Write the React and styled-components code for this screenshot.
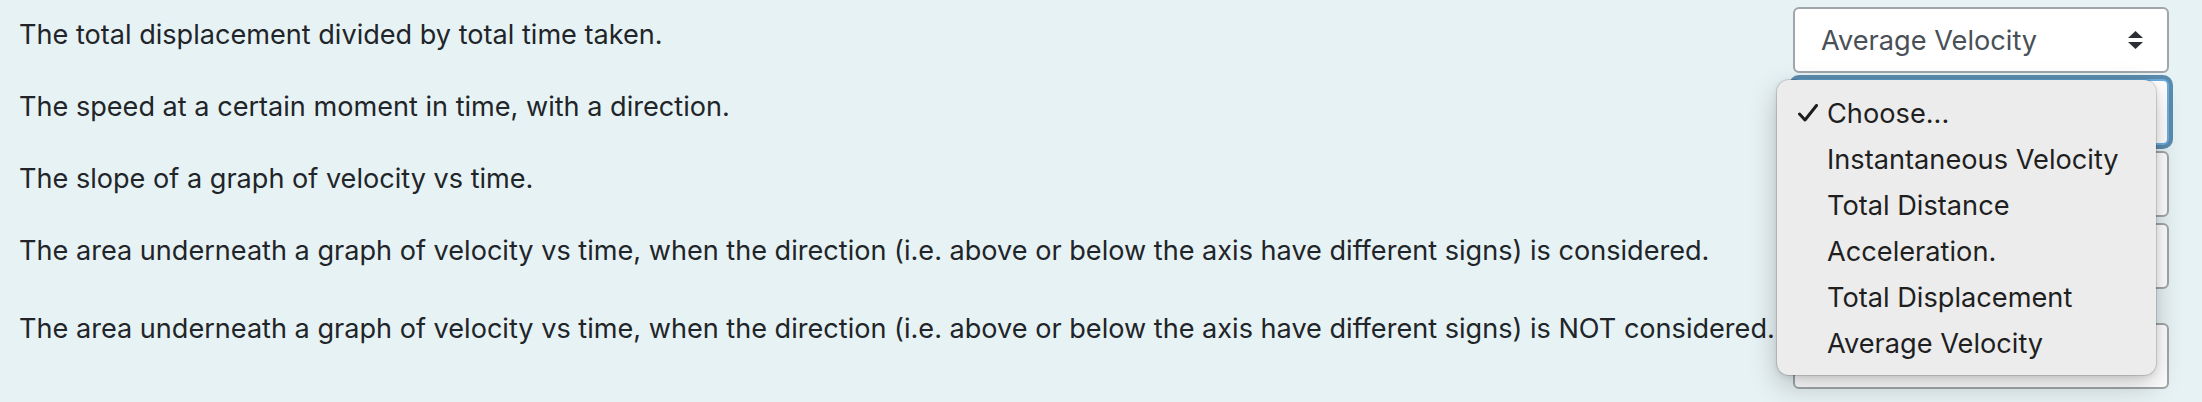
import React from "react";
import styled, { createGlobalStyle } from "styled-components";

const GlobalStyle = createGlobalStyle`
  html, body {
    margin: 0;
    padding: 0;
    background: #e7f2f4;
  }
  body {
    font-family: Inter, "Noto Sans", "Liberation Sans", sans-serif;
    color: #212529;
    -webkit-font-smoothing: antialiased;
  }
`;

// value is left empty where the open menu sits over the select
const definitions = [
  { text: "The total displacement divided by total time taken.", value: "Average Velocity" },
  { text: "The speed at a certain moment in time, with a direction.", value: "", selected: "Choose...", open: true },
  { text: "The slope of a graph of velocity vs time.", value: "" },
  {
    text: "The area underneath a graph of velocity vs time, when the direction (i.e. above or below the axis have different signs) is considered.",
    value: "",
  },
  {
    text: "The area underneath a graph of velocity vs time, when the direction (i.e. above or below the axis have different signs) is NOT considered.",
    value: "",
    spaced: true,
  },
];

const options = [
  "Choose...",
  "Instantaneous Velocity",
  "Total Distance",
  "Acceleration.",
  "Total Displacement",
  "Average Velocity",
];

export default function App() {
  return (
    <>
      <GlobalStyle />
      <Page>
        <MatchList>
          {definitions.map((d, i) => (
            <Row key={i} $spaced={d.spaced}>
              <Stem>{d.text}</Stem>
              <SelectBox $focused={d.open} $spaced={d.spaced}>
                <SelectValue>{d.value}</SelectValue>
                <Arrows />
                {d.open && (
                  <Menu>
                    {options.map((o) => (
                      <MenuItem key={o}>
                        <CheckSlot>{o === d.selected && <Check />}</CheckSlot>
                        {o}
                      </MenuItem>
                    ))}
                  </Menu>
                )}
              </SelectBox>
            </Row>
          ))}
        </MatchList>
      </Page>
    </>
  );
}

function Arrows() {
  return (
    <ArrowIcon width="15" height="18" viewBox="0 0 15 18">
      <polygon points="7.5,0 15,7 0,7" fill="#2b2f33" />
      <polygon points="0,11 15,11 7.5,18" fill="#2b2f33" />
    </ArrowIcon>
  );
}

function Check() {
  return (
    <svg width="20" height="18" viewBox="0 0 20 18">
      <polyline
        points="1.5,10 7,16 18.5,1.5"
        fill="none"
        stroke="#1d1d1f"
        strokeWidth="3"
        strokeLinecap="round"
        strokeLinejoin="round"
      />
    </svg>
  );
}

const Page = styled.div`
  height: 402px;
  box-sizing: border-box;
  padding: 7px 33px 0 19px;
  overflow: hidden;
`;

const MatchList = styled.div`
  display: flex;
  flex-direction: column;
  gap: 6px;
`;

const Row = styled.div`
  display: flex;
  justify-content: space-between;
  align-items: flex-start;
  margin-top: ${(p) => (p.$spaced ? "6px" : "0")};
`;

const Stem = styled.div`
  flex: 1 1 auto;
  min-width: 0;
  white-space: nowrap;
  font-size: 27.1px;
  line-height: 36px;
  padding-top: 10px;
`;

const SelectBox = styled.div`
  position: relative;
  flex: none;
  width: 376px;
  height: 66px;
  box-sizing: border-box;
  margin-top: ${(p) => (p.$spaced ? "22px" : "0")};
  display: flex;
  align-items: center;
  justify-content: space-between;
  padding: 0 24px 0 26px;
  background: #fff;
  border: 2px solid ${(p) => (p.$focused ? "#6aaee0" : "#a1a6ab")};
  border-radius: 6px;
  box-shadow: ${(p) => (p.$focused ? "0 0 0 4px #5b8cae" : "none")};
`;

const SelectValue = styled.span`
  font-size: 27.2px;
  color: #495057;
`;

const ArrowIcon = styled.svg`
  flex: none;
`;

const Menu = styled.div`
  position: absolute;
  left: -18px;
  top: -1px;
  z-index: 5;
  width: 379px;
  box-sizing: border-box;
  padding: 10px 0 9px;
  background: #ececec;
  border-radius: 12px;
  box-shadow: 0 0 0 1px rgba(0, 0, 0, 0.12), 0 10px 28px rgba(0, 0, 0, 0.22),
    0 2px 6px rgba(0, 0, 0, 0.1);
`;

const MenuItem = styled.div`
  display: flex;
  align-items: center;
  height: 46px;
  font-size: 27.2px;
  color: #1f1f1f;
  white-space: nowrap;
`;

const CheckSlot = styled.span`
  width: 50px;
  flex: none;
  display: flex;
  justify-content: flex-end;
  padding-right: 9px;
  box-sizing: border-box;
`;
